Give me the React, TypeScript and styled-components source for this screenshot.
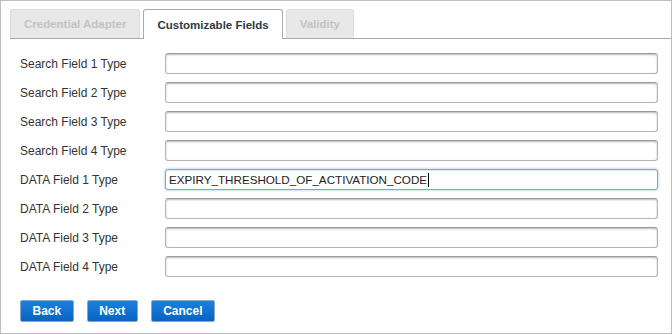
import React from "react";
import styled, { createGlobalStyle, css } from "styled-components";

const Global = createGlobalStyle`
  html, body { margin: 0; padding: 0; background: #fff; }
  body { font-family: Arial, "Liberation Sans", sans-serif; }
  * { box-sizing: border-box; }
`;

const Frame = styled.div`
  width: 672px;
  height: 334px;
  border: 1px solid #bdbdbd;
  padding: 8px 0 0 9px;
  display: flex;
  flex-direction: column;
`;

const TabStrip = styled.div`
  display: flex;
  gap: 3px;
  height: 30px;
  border-bottom: 1px solid #a9a9a9;
  align-items: flex-end;
`;

const Tab = styled.div<{ $active?: boolean }>`
  height: 29px;
  padding: 0 13px;
  display: flex;
  align-items: center;
  font-size: 11.5px;
  font-weight: bold;
  border-radius: 3px 3px 0 0;
  ${(p) =>
    p.$active
      ? css`
          background: #fff;
          color: #2c3a48;
          border: 1px solid #a9a9a9;
          border-bottom: none;
          height: 30px;
          margin-bottom: -1px;
        `
      : css`
          background: #e8e8e8;
          color: #c3c3c3;
          border: 1px solid #dcdcdc;
          border-bottom: none;
        `}
`;

const Form = styled.div`
  padding: 14px 13px 0 10px;
  display: flex;
  flex-direction: column;
  gap: 8px;
`;

const Row = styled.div`
  display: grid;
  grid-template-columns: 145px 493px;
  align-items: center;
  height: 21px;
`;

const Label = styled.label`
  font-size: 12px;
  color: #333;
`;

const inputLook = css`
  height: 21px;
  width: 493px;
  border: 1px solid #b5b5b5;
  border-top-color: #9a9a9a;
  border-radius: 3px;
  box-shadow: inset 0 1px 2px rgba(0, 0, 0, 0.28);
  background: #fff;
  font-family: Arial, "Liberation Sans", sans-serif;
  font-size: 11.65px;
  color: #222;
  padding: 0 3px;
`;

const Input = styled.input`
  ${inputLook};
  outline: none;
`;

const FocusedInput = styled.div`
  ${inputLook};
  border-color: #7ea7cf;
  box-shadow: 0 0 3px rgba(82, 150, 210, 0.6), inset 0 1px 1px rgba(0, 0, 0, 0.1);
  display: flex;
  align-items: center;
  white-space: nowrap;
`;

const Caret = styled.span`
  display: inline-block;
  width: 1px;
  height: 14px;
  background: #000;
  margin-left: 1px;
`;

const Buttons = styled.div`
  display: flex;
  gap: 13px;
  padding: 23px 0 0 10px;
`;

const Button = styled.button`
  height: 22px;
  padding: 0 11.5px;
  border: 1px solid #8fa6bd;
  border-radius: 2px;
  background: linear-gradient(#1d80dc, #0863c2);
  color: #fff;
  font-family: Arial, "Liberation Sans", sans-serif;
  font-size: 12px;
  font-weight: bold;
  cursor: pointer;
`;

const rows = [
  "Search Field 1 Type",
  "Search Field 2 Type",
  "Search Field 3 Type",
  "Search Field 4 Type",
  "DATA Field 1 Type",
  "DATA Field 2 Type",
  "DATA Field 3 Type",
  "DATA Field 4 Type",
];

export default function App() {
  return (
    <>
      <Global />
      <Frame>
        <TabStrip>
          <Tab>Credential Adapter</Tab>
          <Tab $active>Customizable Fields</Tab>
          <Tab>Validity</Tab>
        </TabStrip>
        <Form>
          {rows.map((r, i) => (
            <Row key={r}>
              <Label>{r}</Label>
              {i === 4 ? (
                <FocusedInput>
                  EXPIRY_THRESHOLD_OF_ACTIVATION_CODE
                  <Caret />
                </FocusedInput>
              ) : (
                <Input />
              )}
            </Row>
          ))}
        </Form>
        <Buttons>
          <Button>Back</Button>
          <Button>Next</Button>
          <Button>Cancel</Button>
        </Buttons>
      </Frame>
    </>
  );
}
